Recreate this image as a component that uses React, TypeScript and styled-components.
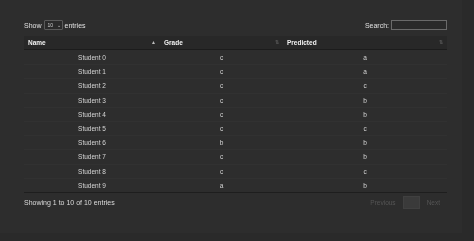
import React from "react";
import styled, { createGlobalStyle } from "styled-components";

const rows = [
  ["Student 0", "c", "a"],
  ["Student 1", "c", "a"],
  ["Student 2", "c", "c"],
  ["Student 3", "c", "b"],
  ["Student 4", "c", "b"],
  ["Student 5", "c", "c"],
  ["Student 6", "b", "b"],
  ["Student 7", "c", "b"],
  ["Student 8", "c", "c"],
  ["Student 9", "a", "b"],
];

const GlobalStyle = createGlobalStyle`
  html, body {
    margin: 0;
    padding: 0;
    background: #2a2a2a;
  }
  body {
    font-family: "Liberation Sans", Arial, sans-serif;
    -webkit-font-smoothing: antialiased;
  }
`;

const Frame = styled.div`
  width: 462px;
  height: 233px;
  background: #2d2d2d;
  box-sizing: border-box;
  padding: 19px 15px 0 24px;
  color: #d8d8d8;
  will-change: transform;
`;

const TopBar = styled.div`
  display: flex;
  justify-content: space-between;
  align-items: center;
  height: 12px;
  font-size: 7px;
  margin-bottom: 5px;
`;

const Label = styled.label`
  display: flex;
  align-items: center;
  gap: 2px;
  color: #e0e0e0;
`;

const Select = styled.div`
  display: flex;
  align-items: center;
  justify-content: space-between;
  width: 19px;
  height: 10px;
  box-sizing: border-box;
  border: 1px solid #5a5a5a;
  border-radius: 1px;
  padding: 0 1px 0 3px;
  font-size: 5px;
  color: #cfcfcf;
  background: #2a2a2a;
`;

const SearchBox = styled.div`
  width: 56px;
  height: 10px;
  box-sizing: border-box;
  border: 1px solid #6a6a6a;
  background: #2a2a2a;
`;

const Table = styled.table`
  width: 423px;
  border-collapse: collapse;
  table-layout: fixed;
  font-size: 6.5px;
`;

const Th = styled.th<{ $w: number }>`
  width: ${(p) => p.$w - 8}px;
  height: 13px;
  padding: 0 4px;
  text-align: left;
  font-weight: 700;
  color: #f2f2f2;
  background: #282828;
  border-bottom: 1px solid #1c1c1c;
  position: relative;
`;

const Sort = styled.span<{ $on?: boolean }>`
  position: absolute;
  right: 4px;
  top: 3px;
  font-size: 5px;
  color: ${(p) => (p.$on ? "#bdbdbd" : "#555")};
`;

const Td = styled.td`
  height: 13.2px;
  padding: 0;
  text-align: center;
  color: #d6d6d6;
  border-top: 1px solid #313131;
`;

const Tbody = styled.tbody`
  tr:first-child td {
    border-top: none;
    height: 14.2px;
  }
  tr:last-child td {
    border-bottom: 1px solid #1e1e1e;
  }
`;

const Footer = styled.div`
  display: flex;
  justify-content: space-between;
  align-items: center;
  margin-top: 3px;
  height: 14px;
  font-size: 7px;
  padding-right: 7px;
`;

const Info = styled.div`
  color: #dcdcdc;
`;

const Pager = styled.div`
  display: flex;
  align-items: center;
  gap: 7px;
  font-size: 6.5px;
  color: #555;
`;

const PageNum = styled.div`
  width: 17px;
  height: 13px;
  background: #3a3a3a;
  border: 1px solid #404040;
  box-sizing: border-box;
`;

export default function App() {
  return (
    <>
      <GlobalStyle />
      <Frame>
        <TopBar>
          <Label>
            Show
            <Select>
              10 <span style={{ fontSize: "5px" }}>⌄</span>
            </Select>
            entries
          </Label>
          <Label>
            Search:
            <SearchBox />
          </Label>
        </TopBar>
        <Table>
          <thead>
            <tr>
              <Th $w={136}>
                Name<Sort $on>▲</Sort>
              </Th>
              <Th $w={123}>
                Grade<Sort>⇅</Sort>
              </Th>
              <Th $w={164}>
                Predicted<Sort>⇅</Sort>
              </Th>
            </tr>
          </thead>
          <Tbody>
            {rows.map((r) => (
              <tr key={r[0]}>
                <Td>{r[0]}</Td>
                <Td>{r[1]}</Td>
                <Td>{r[2]}</Td>
              </tr>
            ))}
          </Tbody>
        </Table>
        <Footer>
          <Info>Showing 1 to 10 of 10 entries</Info>
          <Pager>
            <span>Previous</span>
            <PageNum />
            <span>Next</span>
          </Pager>
        </Footer>
      </Frame>
    </>
  );
}
